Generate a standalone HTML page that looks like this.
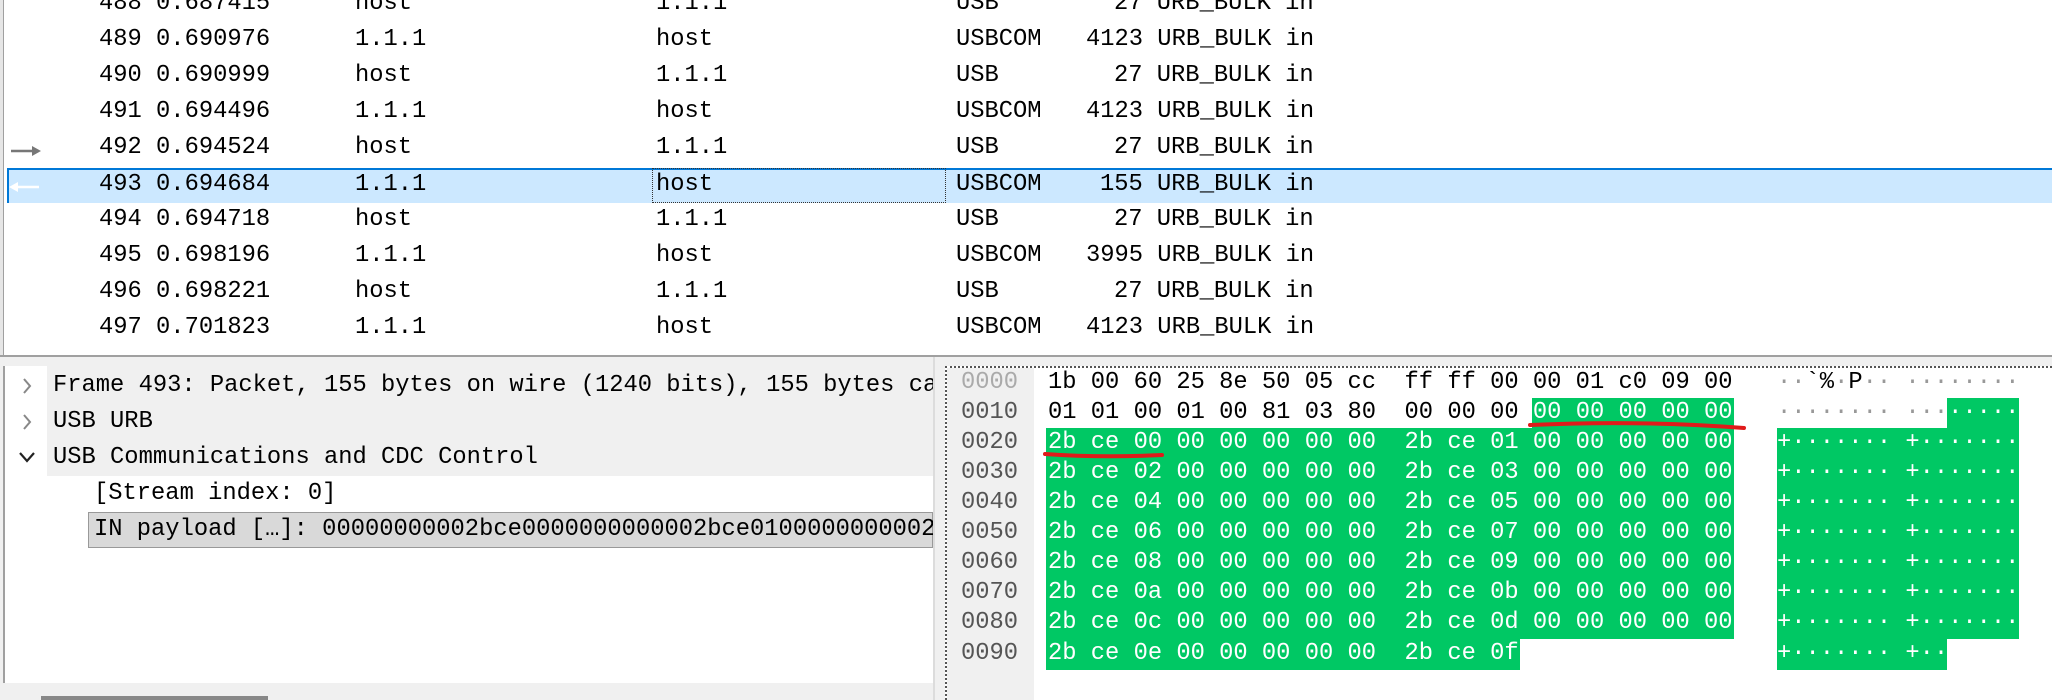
<!DOCTYPE html>
<html><head><meta charset="utf-8"><style>
body{margin:0;width:2052px;height:700px;overflow:hidden;background:#fff;position:relative;font-family:"Liberation Mono",monospace;font-size:23.77px;color:#000}
.a{position:absolute;white-space:pre}
.r{position:absolute;left:0;width:2052px;height:36px;line-height:36px}
.r span{position:absolute;white-space:pre}
.h{position:absolute;left:0;height:30px;line-height:30px;white-space:pre}
.g{position:absolute;background:#00c864}
.w{color:#fff}
.d{color:#999}
</style></head><body>
<!-- top pane -->
<div class="a" style="left:0;top:0;width:3px;height:355px;background:#e6e6e6"></div>
<div class="a" style="left:3px;top:0;width:1px;height:355px;background:#a0a0a0"></div>
<div class="a" style="left:7px;top:168px;width:2045px;height:35px;background:#cce8ff"></div>
<div class="a" style="left:7px;top:168px;width:2045px;height:2px;background:#0078d7"></div>
<div class="a" style="left:7px;top:168px;width:2px;height:35px;background:#0078d7"></div>
<div class="a" style="left:652px;top:168px;width:294px;height:35px;border:1px dotted #333;box-sizing:border-box"></div>
<svg class="a" style="left:10px;top:143px" width="32" height="16"><path d="M1 8H24" stroke="#777" stroke-width="2.5"/><path d="M22 3L31 8L22 13Z" fill="#777"/></svg>
<svg class="a" style="left:8px;top:179px" width="32" height="16"><path d="M8 8H31" stroke="#fff" stroke-width="2.5"/><path d="M10 3L1 8L10 13Z" fill="#fff"/></svg>

<div class="r" style="top:-14px"><span style="left:99px">488 0.687415</span><span style="left:355px">host</span><span style="left:656px">1.1.1</span><span style="left:956px">USB</span><span style="left:1114px">27 URB_BULK in</span></div>
<div class="r" style="top:22px"><span style="left:99px">489 0.690976</span><span style="left:355px">1.1.1</span><span style="left:656px">host</span><span style="left:956px">USBCOM</span><span style="left:1086px">4123 URB_BULK in</span></div>
<div class="r" style="top:58px"><span style="left:99px">490 0.690999</span><span style="left:355px">host</span><span style="left:656px">1.1.1</span><span style="left:956px">USB</span><span style="left:1114px">27 URB_BULK in</span></div>
<div class="r" style="top:94px"><span style="left:99px">491 0.694496</span><span style="left:355px">1.1.1</span><span style="left:656px">host</span><span style="left:956px">USBCOM</span><span style="left:1086px">4123 URB_BULK in</span></div>
<div class="r" style="top:130px"><span style="left:99px">492 0.694524</span><span style="left:355px">host</span><span style="left:656px">1.1.1</span><span style="left:956px">USB</span><span style="left:1114px">27 URB_BULK in</span></div>
<div class="r" style="top:167px"><span style="left:99px">493 0.694684</span><span style="left:355px">1.1.1</span><span style="left:656px">host</span><span style="left:956px">USBCOM</span><span style="left:1100px">155 URB_BULK in</span></div>
<div class="r" style="top:202px"><span style="left:99px">494 0.694718</span><span style="left:355px">host</span><span style="left:656px">1.1.1</span><span style="left:956px">USB</span><span style="left:1114px">27 URB_BULK in</span></div>
<div class="r" style="top:238px"><span style="left:99px">495 0.698196</span><span style="left:355px">1.1.1</span><span style="left:656px">host</span><span style="left:956px">USBCOM</span><span style="left:1086px">3995 URB_BULK in</span></div>
<div class="r" style="top:274px"><span style="left:99px">496 0.698221</span><span style="left:355px">host</span><span style="left:656px">1.1.1</span><span style="left:956px">USB</span><span style="left:1114px">27 URB_BULK in</span></div>
<div class="r" style="top:310px"><span style="left:99px">497 0.701823</span><span style="left:355px">1.1.1</span><span style="left:656px">host</span><span style="left:956px">USBCOM</span><span style="left:1086px">4123 URB_BULK in</span></div>

<!-- splitter -->
<div class="a" style="left:0;top:355px;width:2052px;height:2px;background:#a0a0a0"></div>
<div class="a" style="left:0;top:357px;width:2052px;height:343px;background:#f0f0f0"></div>

<!-- left pane -->
<div class="a" style="left:3px;top:366px;width:930px;height:317px;background:#fff;border-left:2px solid #a0a0a0"></div>
<div class="a" style="left:47px;top:366px;width:886px;height:110px;background:#f0f0f0"></div>
<div class="a" style="left:88px;top:512px;width:845px;height:36px;background:#d9d9d9;border:1px solid #999;box-sizing:border-box"></div>
<svg class="a" style="left:20px;top:376px" width="14" height="20"><path d="M4 3L10 10L4 17" stroke="#888" stroke-width="2" fill="none"/></svg>
<svg class="a" style="left:20px;top:412px" width="14" height="20"><path d="M4 3L10 10L4 17" stroke="#888" stroke-width="2" fill="none"/></svg>
<svg class="a" style="left:17px;top:450px" width="20" height="14"><path d="M3 3L10 11L17 3" stroke="#222" stroke-width="2.2" fill="none"/></svg>
<div style="position:absolute;left:0;top:368px;width:933px;height:200px;overflow:hidden">
<div class="a" style="left:53px;top:0;line-height:36px">Frame 493: Packet, 155 bytes on wire (1240 bits), 155 bytes captured</div>
<div class="a" style="left:53px;top:36px;line-height:36px">USB URB</div>
<div class="a" style="left:53px;top:72px;line-height:36px">USB Communications and CDC Control</div>
<div class="a" style="left:94px;top:108px;line-height:36px">[Stream index: 0]</div>
<div class="a" style="left:94px;top:144px;line-height:36px">IN payload […]: 00000000002bce0000000000002bce0100000000002bce02</div>
</div>
<div class="a" style="left:41px;top:696px;width:227px;height:4px;background:#888"></div>
<div class="a" style="left:933px;top:357px;width:2px;height:343px;background:#dcdcdc"></div>

<!-- right pane -->
<div class="a" style="left:945px;top:366px;width:1107px;height:334px;background:#fff;border-left:2px dotted #555;border-top:2px dotted #555;box-sizing:border-box"></div>
<div class="a" style="left:947px;top:368px;width:87px;height:332px;background:#f0f0f0"></div>
<div class="g" style="left:1532px;top:398px;width:202px;height:30px"></div>
<div class="g" style="left:1046px;top:428px;width:688px;height:211px"></div>
<div class="g" style="left:1046px;top:639px;width:474px;height:31px"></div>
<div class="g" style="left:1947px;top:398px;width:72px;height:30px"></div>
<div class="g" style="left:1777px;top:428px;width:242px;height:211px"></div>
<div class="g" style="left:1777px;top:639px;width:170px;height:31px"></div>

<div class="h" style="top:368px"><span class="a" style="left:961px;color:#aaa">0000</span><span class="a" style="left:1048px">1b 00 60 25 8e 50 05 cc  ff ff 00 00 01 c0 09 00</span><span class="a" style="left:1777px"><span class="d">··</span>`%<span class="d">·</span>P<span class="d">··</span> <span class="d">········</span></span></div>
<div class="h" style="top:398px"><span class="a" style="left:961px;color:#555">0010</span><span class="a" style="left:1048px">01 01 00 01 00 81 03 80  00 00 00 <span class="w">00 00 00 00 00</span></span><span class="a" style="left:1777px"><span class="d">········ ···</span><span class="w">·····</span></span></div>
<div class="h" style="top:428px"><span class="a" style="left:961px;color:#555">0020</span><span class="a w" style="left:1048px">2b ce 00 00 00 00 00 00  2b ce 01 00 00 00 00 00</span><span class="a w" style="left:1777px">+······· +·······</span></div>
<div class="h" style="top:458px"><span class="a" style="left:961px;color:#555">0030</span><span class="a w" style="left:1048px">2b ce 02 00 00 00 00 00  2b ce 03 00 00 00 00 00</span><span class="a w" style="left:1777px">+······· +·······</span></div>
<div class="h" style="top:488px"><span class="a" style="left:961px;color:#555">0040</span><span class="a w" style="left:1048px">2b ce 04 00 00 00 00 00  2b ce 05 00 00 00 00 00</span><span class="a w" style="left:1777px">+······· +·······</span></div>
<div class="h" style="top:518px"><span class="a" style="left:961px;color:#555">0050</span><span class="a w" style="left:1048px">2b ce 06 00 00 00 00 00  2b ce 07 00 00 00 00 00</span><span class="a w" style="left:1777px">+······· +·······</span></div>
<div class="h" style="top:548px"><span class="a" style="left:961px;color:#555">0060</span><span class="a w" style="left:1048px">2b ce 08 00 00 00 00 00  2b ce 09 00 00 00 00 00</span><span class="a w" style="left:1777px">+······· +·······</span></div>
<div class="h" style="top:578px"><span class="a" style="left:961px;color:#555">0070</span><span class="a w" style="left:1048px">2b ce 0a 00 00 00 00 00  2b ce 0b 00 00 00 00 00</span><span class="a w" style="left:1777px">+······· +·······</span></div>
<div class="h" style="top:608px"><span class="a" style="left:961px;color:#555">0080</span><span class="a w" style="left:1048px">2b ce 0c 00 00 00 00 00  2b ce 0d 00 00 00 00 00</span><span class="a w" style="left:1777px">+······· +·······</span></div>
<div class="h" style="top:639px"><span class="a" style="left:961px;color:#555">0090</span><span class="a w" style="left:1048px">2b ce 0e 00 00 00 00 00  2b ce 0f</span><span class="a w" style="left:1777px">+······· +··</span></div>

<svg class="a" style="left:0;top:0" width="2052" height="700"><path d="M1530 425Q1640 420 1744 428" stroke="#e01b1b" stroke-width="4" fill="none" stroke-linecap="round"/><path d="M1045 454Q1100 458 1162 455" stroke="#e01b1b" stroke-width="4" fill="none" stroke-linecap="round"/></svg>
</body></html>
